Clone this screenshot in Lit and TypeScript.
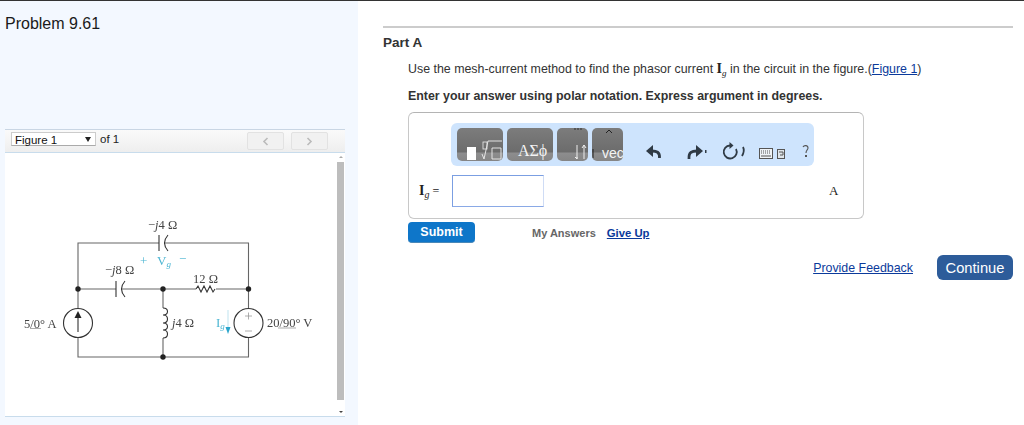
import { LitElement, html, css, svg } from "lit";
import { customElement } from "lit/decorators.js";

const circuit = svg`
  <g fill="none" stroke="#666" stroke-width="1.1">
    <path d="M78 308V243H159M164 243H248.500V308M248.500 338V357H78V338"/>
    <path d="M78 289H116M121 289H196M216 289H248.500"/>
    <path d="M163 289V308M163 338V357"/>
  </g>
  <g fill="none" stroke="#333" stroke-width="1.1">
    <circle cx="78" cy="323" r="14.500"/>
    <circle cx="248.500" cy="323" r="14.500"/>
    <path d="M159 235V251M168 235Q161 243 168 251"/>
    <path d="M116 281V297M125 281Q118 289 125 297"/>
    <path d="M196 289l2-3 3 6 3-6 3 6 3-6 3 6 2-3"/>
    <path d="M163 308c6 0 6 7 0 7c6 0 6 8 0 8c6 0 6 7 0 7c6 0 6 8 0 8"/>
    <path d="M78 332V316"/>
  </g>
  <path d="M30 328.500H41M278 328H296" stroke="#888" stroke-width=".7" fill="none"/>
  <path d="M78 311l-3.500 7h7z" fill="#222"/>
  <g fill="#222">
    <circle cx="78" cy="289" r="2.700"/>
    <circle cx="163" cy="289" r="2.700"/>
    <circle cx="163" cy="357" r="2.700"/>
    <circle cx="248.500" cy="289" r="2.700"/>
  </g>
  <g fill="none" stroke="#999" stroke-width=".8">
    <path d="M245 331h7M245 316h7M248.500 312.500v7"/>
  </g>
  <path d="M228 310V328" stroke="#bfe3ef" stroke-width="1"/>
  <path d="M225.500 327h5l-2.500 7z" fill="#2aa5cc"/>
  <g class="ct">
    <text x="148" y="229">−<tspan font-style="italic">j</tspan>4 Ω</text>
    <text x="105" y="274">−<tspan font-style="italic">j</tspan>8 Ω</text>
    <text x="193" y="283">12 Ω</text>
    <text x="172" y="327"><tspan font-style="italic">j</tspan>4 Ω</text>
    <text x="24" y="328">5/0° A</text>
    <text x="267" y="327">20/90° V</text>
  </g>
  <g class="cb">
    <text x="140" y="265">+</text>
    <text x="157" y="265">V<tspan font-size="9" font-style="italic" dy="2">g</tspan></text>
    <text x="179" y="263">−</text>
    <text x="216" y="327">I<tspan font-size="9" font-style="italic" dy="2">g</tspan></text>
  </g>
`;

@customElement("app-root")
export class AppRoot extends LitElement {
  static styles = css`
    :host {
      display: flex;
      width: 1024px;
      height: 425px;
      overflow: hidden;
      box-sizing: border-box;
      border-top: 1px solid #333;
      background: #fff;
      font-family: "Liberation Sans", Arial, sans-serif;
      color: #222;
    }
    .left {
      width: 358px;
      flex: none;
      background: #f3f8ff;
      display: flex;
      flex-direction: column;
    }
    .title {
      margin: 14px 0 0 5px;
      font-size: 16px;
      line-height: 18px;
      font-weight: 400;
      color: #1a1a1a;
    }
    .figbar {
      margin: 96px 0 0 5px;
      width: 340px;
      height: 23px;
      box-sizing: border-box;
      border-top: 1px solid #c9d6e4;
      background: linear-gradient(#fafafa, #eeeeee);
      display: flex;
      align-items: flex-start;
      font-size: 11.500px;
      line-height: 12px;
    }
    .select {
      margin: 2px 0 0 6px;
      width: 85px;
      height: 14px;
      box-sizing: border-box;
      background: #fff;
      border: 1px solid #ccc;
      border-bottom-color: #aaa;
      display: flex;
      align-items: center;
      justify-content: space-between;
      padding: 1px 4px 0 3px;
      color: #111;
    }
    .caret {
      width: 0;
      height: 0;
      border-left: 3px solid transparent;
      border-right: 3px solid transparent;
      border-top: 5px solid #222;
    }
    .of {
      margin: 3px 0 0 4px;
    }
    .nav {
      margin: 2px 17px 0 auto;
      display: flex;
      gap: 7px;
    }
    .nav span {
      width: 37px;
      height: 18px;
      box-sizing: border-box;
      border: 1px solid #e2e2e2;
      border-radius: 2px;
      background: #f1f1f1;
      display: flex;
      align-items: center;
      justify-content: center;
    }
    .panel {
      margin-left: 5px;
      width: 340px;
      height: 265px;
      box-sizing: border-box;
      border-top: 1px solid #c8dcec;
      border-bottom: 1px solid #c8dcec;
      background: #fff;
      display: flex;
    }
    .figure {
      width: 332px;
      height: 263px;
      flex: none;
      filter: blur(0.35px);
    }
    .ct text {
      font: 12.500px "Liberation Serif", serif;
      fill: #444;
    }
    .cb text {
      font: 13px "Liberation Serif", serif;
      fill: #4db6d3;
    }
    .scroll {
      width: 7px;
      display: flex;
      flex-direction: column;
      align-items: center;
    }
    .thumb {
      flex: 1;
      width: 7px;
      margin: 4px 0 11px;
      background: #bdbdbd;
    }
    .up,
    .down {
      width: 0;
      height: 0;
      border-left: 2px solid transparent;
      border-right: 2px solid transparent;
    }
    .up {
      margin-top: 3px;
      border-bottom: 2px solid #aaa;
    }
    .down {
      margin-bottom: 3px;
      border-top: 2px solid #444;
    }

    .right {
      flex: 1;
      padding: 25px 11px 0 25px;
      min-width: 0;
    }
    .rule {
      height: 2px;
      background: #ccc;
    }
    .part {
      margin: 7px 0 0;
      font-size: 13.500px;
      line-height: 16px;
      font-weight: 700;
      color: #333;
    }
    .body {
      padding-left: 25px;
    }
    .prompt {
      margin: 9px 0 0;
      font-size: 12.400px;
      line-height: 18px;
      color: #333;
    }
    .prompt.strong {
      margin-top: 8px;
      font-weight: 700;
    }
    a {
      color: #0b3a9b;
      text-decoration: underline;
    }
    .sym {
      font-family: "Liberation Serif", serif;
      font-size: 14px;
      line-height: 12px;
      font-weight: 700;
      color: #222;
    }
    .sym i {
      font-weight: 400;
      font-size: 9px;
      vertical-align: -3px;
    }
    .box {
      margin-top: 7px;
      width: 456px;
      height: 107px;
      box-sizing: border-box;
      border: 1px solid #c8c8c8;
      border-top-color: #b4b4b4;
      border-radius: 6px;
      padding: 10px 0 0 42px;
    }
    .tools {
      width: 363px;
      height: 43px;
      box-sizing: border-box;
      background: #cee4fd;
      border-radius: 6px;
      padding: 5px 0 0 6px;
      display: flex;
      align-items: flex-start;
    }
    .tbtn {
      height: 33px;
      border-radius: 5px;
      background: linear-gradient(#7c7c7c 0, #6c6c6c 24px, #8d8d8e 25px, #858585 100%);
      margin-right: 4px;
      flex: none;
      display: block;
    }
    .tbtn text {
      fill: #f4f4f4;
    }
    .w46 {
      width: 46px;
    }
    .w31 {
      width: 31px;
    }
    .ticon {
      flex: none;
      display: block;
      margin-top: 14px;
    }
    .undo {
      margin-left: 18px;
    }
    .redo {
      margin-left: 22px;
    }
    .reload {
      margin-left: 12px;
    }
    .kbd {
      margin-left: 12px;
    }
    .help {
      margin-left: 15px;
    }
    .answer {
      margin-top: 9px;
      display: flex;
      align-items: center;
      height: 32px;
      margin-left: -32px;
    }
    .lhs {
      width: 33px;
      font: 12px "Liberation Serif", serif;
      white-space: nowrap;
    }
    .lhs b {
      font-size: 14px;
    }
    .lhs i {
      font-size: 10px;
      vertical-align: -3px;
    }
    .input {
      width: 92px;
      height: 32px;
      box-sizing: border-box;
      border: 1px solid #7b9fe2;
      border-bottom-color: #8aa9e6;
      border-right-color: #cfdcf5;
      background: #fff;
    }
    .unit {
      margin-left: 285px;
      font: 13px "Liberation Serif", serif;
      color: #222;
    }
    .actions {
      margin-top: 3px;
      height: 21px;
      display: flex;
      align-items: center;
    }
    .submit {
      width: 67px;
      height: 21px;
      box-sizing: border-box;
      border: none;
      border-bottom: 1px solid #4a88b8;
      border-radius: 4px;
      background: #0e76c9;
      color: #fff;
      font: 700 12.500px "Liberation Sans", Arial, sans-serif;
      padding: 0;
    }
    .mine {
      margin-left: 57px;
      font-size: 11px;
      font-weight: 700;
      color: #666;
    }
    .giveup {
      margin-left: 11px;
      font-size: 11.300px;
      font-weight: 700;
    }
    .foot {
      margin-top: 12px;
      display: flex;
      justify-content: flex-end;
      align-items: center;
      height: 25px;
    }
    .feedback {
      font-size: 12.400px;
      margin-right: 24px;
    }
    .continue {
      width: 76px;
      height: 25px;
      border: none;
      border-radius: 6px;
      background: #2d5c9a;
      color: #fff;
      font: 14.700px "Liberation Sans", Arial, sans-serif;
      padding: 0;
    }
  `;

  render() {
    return html`
      <section class="left">
        <h1 class="title">Problem 9.61</h1>
        <div class="figbar">
          <div class="select"><span>Figure 1</span><span class="caret"></span></div>
          <span class="of">of 1</span>
          <div class="nav">
            <span><svg width="7" height="9" viewBox="0 0 7 9"><path d="M5.500 1L2 4.500 5.500 8" fill="none" stroke="#bbb" stroke-width="1.600"/></svg></span>
            <span><svg width="7" height="9" viewBox="0 0 7 9"><path d="M1.500 1L5 4.500 1.500 8" fill="none" stroke="#bbb" stroke-width="1.600"/></svg></span>
          </div>
        </div>
        <div class="panel">
          <svg class="figure" viewBox="5 153 332 263">${circuit}</svg>
          <div class="scroll"><span class="up"></span><span class="thumb"></span><span class="down"></span></div>
        </div>
      </section>
      <section class="right">
        <div class="rule"></div>
        <h2 class="part">Part A</h2>
        <div class="body">
          <p class="prompt">Use the mesh-current method to find the phasor current <span class="sym">I<i>g</i></span> in the circuit in the figure.(<a>Figure 1</a>)</p>
          <p class="prompt strong">Enter your answer using polar notation. Express argument in degrees.</p>
          <div class="box">
            <div class="tools">
              <svg class="tbtn w46" viewBox="0 0 46 33">
                <rect x="10" y="19" width="9" height="13" fill="#fff"/>
                <rect x="26" y="14" width="4" height="7" fill="none" stroke="#eee" stroke-width=".8"/>
                <path d="M25 26l2 5 4-18h14M35 20h9v11h-9z" fill="none" stroke="#eee" stroke-width=".9"/>
              </svg>
              <svg class="tbtn w46" viewBox="0 0 46 33">
                <text x="11" y="28" font-family="Liberation Serif, serif" font-size="16">ΑΣϕ</text>
              </svg>
              <svg class="tbtn w31" viewBox="0 0 31 33">
                <path d="M17 1h8" stroke="#333" stroke-width="1" stroke-dasharray="2 1"/>
                <path d="M20 17v14M18 29l2 2 0-2M27 31V17M25 20l2-3 2 3" fill="none" stroke="#eee" stroke-width="1"/>
              </svg>
              <svg class="tbtn w31" viewBox="0 0 31 33">
                <path d="M14 5l3-3 3 3" fill="none" stroke="#222" stroke-width="1"/>
                <path d="M1 21v9" stroke="#222" stroke-width="1"/>
                <text x="10" y="30" font-family="Liberation Sans, sans-serif" font-size="14">vec</text>
              </svg>
              <svg class="ticon undo" width="18" height="20" viewBox="0 0 18 20">
                <path d="M1 9l7-6v12z" fill="#2f3a45"/>
                <path d="M7 9c4.500 0 8 1 7.500 7" fill="none" stroke="#2f3a45" stroke-width="2.800"/>
              </svg>
              <svg class="ticon redo" width="24" height="20" viewBox="0 0 24 20">
                <path d="M18 9l-7-6v12z" fill="#2f3a45"/>
                <path d="M12 9c-5 0-8.500 1-8 8" fill="none" stroke="#2f3a45" stroke-width="2.800"/>
                <rect x="20" y="8" width="1.500" height="3" fill="#2f3a45"/>
              </svg>
              <svg class="ticon reload" width="26" height="20" viewBox="0 0 26 20">
                <path d="M9 3.500a6.500 6.500 0 1 0 6 3.500" fill="none" stroke="#2f3a45" stroke-width="1.800"/>
                <path d="M8.500 0v7l4-3.500z" fill="#2f3a45"/>
                <path d="M22 5q2 4-1 9" fill="none" stroke="#2f3a45" stroke-width="1.800"/>
              </svg>
              <svg class="ticon kbd" width="27" height="20" viewBox="0 0 27 20">
                <rect x=".5" y="6.500" width="13" height="10" fill="#eef2f6" stroke="#555"/>
                <path d="M2 9h10M2 11h10" stroke="#555" stroke-dasharray="1 1"/>
                <path d="M2 14h10" stroke="#555"/>
                <rect x="18.500" y="7.500" width="7" height="9" fill="#dfe5ea" stroke="#555"/>
                <path d="M20 10h4M24 10v3h-3" fill="none" stroke="#555"/>
              </svg>
              <svg class="ticon help" width="10" height="20" viewBox="0 0 10 20">
                <path d="M2 5c1-2 5-2 5 1 0 2-2 2-2 5" fill="none" stroke="#555" stroke-width="1.100"/>
                <rect x="4" y="13" width="2" height="2" fill="#555"/>
              </svg>
            </div>
            <div class="answer">
              <span class="lhs"><b>I</b><i>g</i> =</span>
              <div class="input"></div>
              <span class="unit">A</span>
            </div>
          </div>
          <div class="actions">
            <button class="submit">Submit</button>
            <span class="mine">My Answers</span>
            <a class="giveup">Give Up</a>
          </div>
        </div>
        <div class="foot">
          <a class="feedback">Provide Feedback</a>
          <button class="continue">Continue</button>
        </div>
      </section>
    `;
  }
}
